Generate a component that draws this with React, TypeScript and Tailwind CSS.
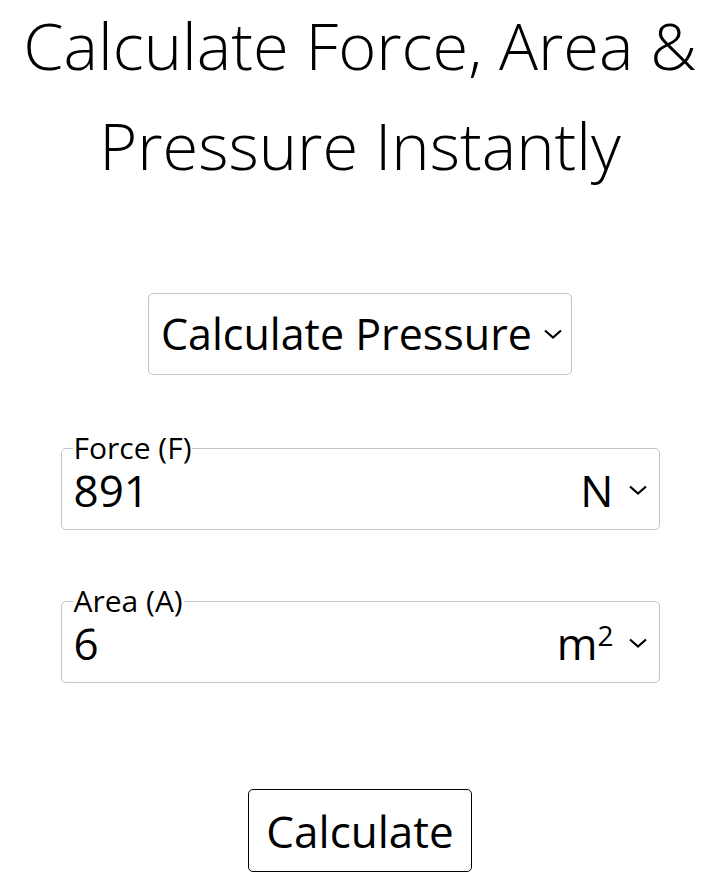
import React, { useState } from "react";

const font = { fontFamily: '"Open Sans", "Noto Sans", sans-serif' };

function Chevron() {
  return (
    <svg width="20" height="12" viewBox="0 0 20 12" className="shrink-0">
      <path d="M2 2.5 L10 9.5 L18 2.5" fill="none" stroke="#000" strokeWidth="2.2" />
    </svg>
  );
}

function Field({ label, value, unit }: { label: string; value: string; unit: React.ReactNode }) {
  return (
    <fieldset className="w-[599px] h-[97px] border border-[#c4c4c4] rounded-[5px] pl-[12px] pr-[11px]">
      <legend className="text-[30px] leading-[30px] px-[1px] -ml-[1px]">{label}</legend>
      <div className="flex items-center h-[50px] pt-[4px]">
        <span className="text-[44px] leading-[44px] flex-1">{value}</span>
        <span className="text-[44px] leading-[44px] mr-[14px]">{unit}</span>
        <Chevron />
      </div>
    </fieldset>
  );
}

export default function App() {
  const [mode] = useState("Calculate Pressure");
  return (
    <div className="min-h-[891px] w-[720px] bg-white text-black flex flex-col items-center" style={font}>
      <h1 className="text-[65px] font-light leading-[100px] text-center mt-[-5px]">
        Calculate Force, Area &amp;<br />Pressure Instantly
      </h1>
      <div className="mt-[98px] w-[424px] h-[82px] border border-[#c4c4c4] rounded-[5px] flex items-center pl-[12px] pr-[8px]">
        <span className="text-[43px] flex-1">{mode}</span>
        <Chevron />
      </div>
      <div className="mt-[58px] flex flex-col items-center gap-[56px]">
        <Field label="Force (F)" value="891" unit="N" />
        <Field label="Area (A)" value="6" unit={<>m<sup className="text-[28px]">2</sup></>} />
      </div>
      <button className="mt-[106px] w-[224px] h-[83px] border border-black rounded-[5px] text-[44px]">
        Calculate
      </button>
    </div>
  );
}
